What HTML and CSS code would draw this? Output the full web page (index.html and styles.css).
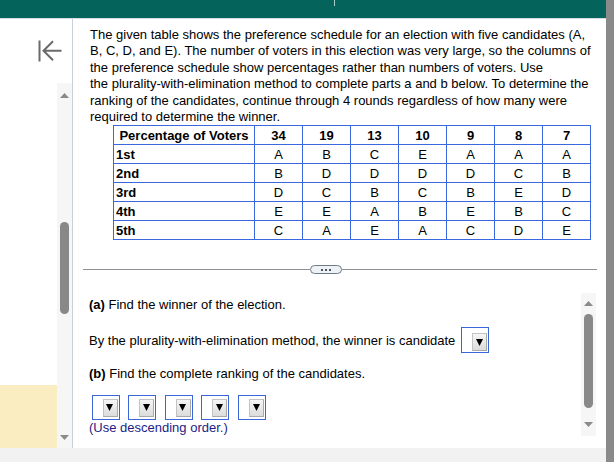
FILE: index.html
```html
<!DOCTYPE html>
<html lang="en">
<head>
<meta charset="utf-8">
<title>Preference schedule</title>
<link rel="stylesheet" href="styles.css">
</head>
<body>
<div class="screen">
  <div class="frame">
    <header class="topbar"><span class="tick"></span></header>
    <div class="main">
      <aside class="side">
        <div class="side-top">
          <svg class="collapse" width="24" height="22" viewBox="0 0 24 22" aria-hidden="true">
            <path d="M1.5 0.5V21.5M5.5 10.7H23.5M15 1.2L5.5 10.7L15 20.2" fill="none" stroke="#6b6b6b" stroke-width="2"/>
          </svg>
        </div>
        <div class="side-body">
          <div class="side-pane"><div class="note"></div></div>
          <div class="vscroll side-scroll">
            <svg class="arrow" width="9" height="5" viewBox="0 0 9 5"><polygon points="4.5,0 9,5 0,5"/></svg>
            <span class="thumb"></span>
            <svg class="arrow down" width="9" height="5" viewBox="0 0 9 5"><polygon points="0,0 9,0 4.5,5"/></svg>
          </div>
        </div>
      </aside>
      <section class="content">
        <p class="intro">The given table shows the preference schedule for an election with five candidates (A,<br>B, C, D, and E). The number of voters in this election was very large, so the columns of<br>the preference schedule show percentages rather than numbers of voters. Use<br>the plurality-with-elimination method to complete parts a and b below. To determine the<br>ranking of the candidates, continue through 4 rounds regardless of how many were<br>required to determine the winner.</p>
        <table class="schedule">
          <colgroup>
            <col class="c-label"><col class="c-num"><col class="c-num"><col class="c-num"><col class="c-num"><col class="c-num"><col class="c-num"><col class="c-num">
          </colgroup>
          <tr class="head"><th>Percentage of Voters</th><th>34</th><th>19</th><th>13</th><th>10</th><th>9</th><th>8</th><th>7</th></tr>
          <tr><th class="rank">1st</th><td>A</td><td>B</td><td>C</td><td>E</td><td>A</td><td>A</td><td>A</td></tr>
          <tr><th class="rank">2nd</th><td>B</td><td>D</td><td>D</td><td>D</td><td>D</td><td>C</td><td>B</td></tr>
          <tr><th class="rank">3rd</th><td>D</td><td>C</td><td>B</td><td>C</td><td>B</td><td>E</td><td>D</td></tr>
          <tr><th class="rank">4th</th><td>E</td><td>E</td><td>A</td><td>B</td><td>E</td><td>B</td><td>C</td></tr>
          <tr><th class="rank">5th</th><td>C</td><td>A</td><td>E</td><td>A</td><td>C</td><td>D</td><td>E</td></tr>
        </table>
        <div class="divider">
          <span class="rule first"></span>
          <span class="pill"><i></i><i></i><i></i></span>
          <span class="rule"></span>
        </div>
        <div class="lower">
          <div class="answers">
            <p class="part-a"><b>(a)</b> Find the winner of the election.</p>
            <div class="winner-row">
              <span>By the plurality-with-elimination method, the winner is candidate</span>
              <span class="dd tall"><span class="dd-btn"><svg width="7" height="7" viewBox="0 0 7 7"><polygon points="0,0 7,0 3.5,7"/></svg></span></span>
            </div>
            <p class="part-b"><b>(b)</b> Find the complete ranking of the candidates.</p>
            <div class="rank-row">
              <span class="dd"><span class="dd-btn"><svg width="7" height="7" viewBox="0 0 7 7"><polygon points="0,0 7,0 3.5,7"/></svg></span></span>
              <span class="dd"><span class="dd-btn"><svg width="7" height="7" viewBox="0 0 7 7"><polygon points="0,0 7,0 3.5,7"/></svg></span></span>
              <span class="dd"><span class="dd-btn"><svg width="7" height="7" viewBox="0 0 7 7"><polygon points="0,0 7,0 3.5,7"/></svg></span></span>
              <span class="dd"><span class="dd-btn"><svg width="7" height="7" viewBox="0 0 7 7"><polygon points="0,0 7,0 3.5,7"/></svg></span></span>
              <span class="dd"><span class="dd-btn"><svg width="7" height="7" viewBox="0 0 7 7"><polygon points="0,0 7,0 3.5,7"/></svg></span></span>
            </div>
            <p class="hint">(Use descending order.)</p>
          </div>
          <div class="vscroll inner-scroll">
            <svg class="arrow" width="9" height="5" viewBox="0 0 9 5"><polygon points="4.5,0 9,5 0,5"/></svg>
            <span class="thumb"></span>
            <svg class="arrow down" width="9" height="5" viewBox="0 0 9 5"><polygon points="0,0 9,0 4.5,5"/></svg>
          </div>
        </div>
      </section>
    </div>
    <footer class="bottombar"></footer>
  </div>
  <div class="outer-scroll"></div>
</div>
</body>
</html>
```
FILE: styles.css
```css
html, body {
  margin: 0;
  padding: 0;
}
body {
  font-family: "Liberation Sans", Arial, sans-serif;
  font-size: 13px;
  color: #000;
  background: #fff;
}
.screen {
  display: flex;
  width: 614px;
  height: 462px;
  overflow: hidden;
}
.frame {
  width: 606px;
  display: flex;
  flex-direction: column;
}
.outer-scroll {
  flex: 1;
  background: #8a8a8a;
}
.topbar {
  height: 18px;
  background: #04635a;
  border-bottom: 1px solid #d5dce4;
  display: flex;
  flex-shrink: 0;
}
.tick {
  width: 1px;
  height: 6px;
  margin-left: 334px;
  background: #a9cfc8;
}
.main {
  flex: 1;
  display: flex;
  min-height: 0;
}
.side {
  width: 72px;
  border-right: 1px solid #c9d0dd;
  display: flex;
  flex-direction: column;
  flex-shrink: 0;
}
.side-top {
  height: 64px;
  padding: 21px 0 0 38px;
  box-sizing: border-box;
}
.collapse {
  display: block;
}
.side-body {
  flex: 1;
  display: flex;
}
.side-pane {
  flex: 1;
  display: flex;
  flex-direction: column;
  justify-content: flex-end;
}
.note {
  height: 63px;
  background: #faedc2;
}
.vscroll {
  width: 15px;
  background: #f6f6f6;
  display: flex;
  flex-direction: column;
  align-items: center;
  box-sizing: border-box;
  flex-shrink: 0;
}
.arrow {
  display: block;
  fill: #8a8a8a;
}
.thumb {
  display: block;
  width: 9px;
  background: #888;
  border-radius: 5px;
}
.side-scroll {
  padding-top: 10px;
}
.side-scroll .thumb {
  height: 92px;
  margin-top: 124px;
}
.side-scroll .down {
  margin-top: 121px;
}
.content {
  flex: 1;
  min-width: 0;
}
.intro {
  margin: 0;
  padding: 8px 0 0 17px;
  line-height: 16.4px;
}
.schedule {
  margin: 0 0 0 40px;
  border-collapse: collapse;
  table-layout: fixed;
  width: 477px;
}
.c-label {
  width: 141px;
}
.c-num {
  width: 48px;
}
.schedule tr {
  height: 19px;
}
.schedule th,
.schedule td {
  border: 1px solid #3b67e0;
  padding: 0;
  text-align: center;
  vertical-align: middle;
  font-size: 13px;
  line-height: 15px;
}
.schedule td {
  font-weight: normal;
}
.schedule th.rank {
  text-align: left;
  padding-left: 2px;
}
.divider {
  display: flex;
  align-items: center;
  height: 9px;
  margin: 25px 0 0 10px;
  width: 514px;
}
.rule {
  flex: 1;
  height: 1px;
  background: #8f9397;
}
.rule.first {
  flex: 0 0 227px;
}
.pill {
  width: 32px;
  height: 9px;
  box-sizing: border-box;
  border: 1px solid #6f7a87;
  border-radius: 5px;
  background: #eef2f6;
  display: flex;
  align-items: center;
  justify-content: center;
  gap: 2px;
}
.pill i {
  width: 2px;
  height: 2px;
  background: #4d5560;
}
.lower {
  display: flex;
  align-items: flex-start;
  margin-left: 10px;
  width: 513px;
}
.answers {
  flex: 1;
  padding: 23px 0 0 6px;
}
.answers p {
  margin: 0;
  line-height: 16.4px;
}
.winner-row {
  display: flex;
  align-items: center;
  height: 26px;
  margin-top: 13.6px;
  gap: 6px;
}
.part-b {
  padding-top: 12.8px;
}
.rank-row {
  display: flex;
  gap: 8.6px;
  margin: 12.8px 0 0 2.7px;
}
.dd {
  width: 28px;
  height: 25px;
  box-sizing: border-box;
  border: 1px solid #3a66d8;
  display: flex;
  justify-content: flex-end;
  align-items: center;
  padding-right: 1px;
  background: #fff;
}
.dd.tall {
  height: 26px;
  align-items: flex-end;
  padding-bottom: 1px;
}
.dd-btn {
  width: 15px;
  height: 18px;
  box-sizing: border-box;
  border: 1px solid #c3c3c3;
  border-right-color: #a9a9a9;
  border-bottom-color: #a9a9a9;
  background: linear-gradient(#f6f6f6, #dcdcdc);
  display: flex;
  align-items: center;
  justify-content: center;
  padding-right: 1px;
}
.dd-btn svg {
  display: block;
  fill: #000;
}
.hint {
  color: #241c86;
}
.inner-scroll {
  margin-top: 19px;
  height: 143px;
  padding-top: 8px;
}
.inner-scroll .thumb {
  height: 94px;
  margin-top: 8px;
}
.inner-scroll .down {
  margin-top: 14px;
}
.bottombar {
  height: 14px;
  background: #f2f2f2;
  flex-shrink: 0;
}
```
